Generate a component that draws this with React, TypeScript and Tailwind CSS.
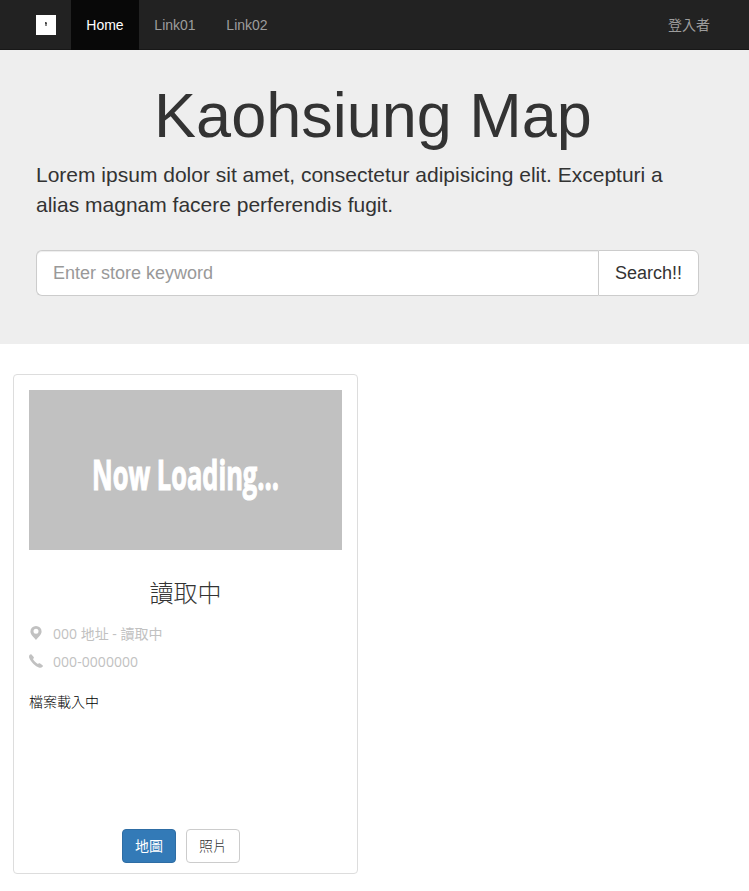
import React from "react";

const NavLink = (props: { label: string; width: string; active?: boolean }) => {
  return (
    <a
      href="#"
      className={`block h-[50px] py-[15px] text-center ${props.width} ${
        props.active ? "bg-[#080808] text-white" : "text-[#9d9d9d]"
      }`}
    >
      {props.label}
    </a>
  );
};

const Navbar = () => {
  return (
    <nav className="flex h-[50px] justify-between border-b border-[#181818] bg-[#222] pl-9 pr-6 text-sm leading-5">
      <div className="flex">
        <a href="#" className="mr-[15px] mt-[15px] block h-5 w-5 bg-white">
          <svg viewBox="0 0 20 20" className="block h-5 w-5">
            <path d="M9 7h2v4H9z" fill="#888" />
            <path d="M9 7h1v1h1v1H9z" fill="#444" />
          </svg>
        </a>
        <NavLink label="Home" width="w-[68px]" active />
        <NavLink label="Link01" width="w-[72px]" />
        <NavLink label="Link02" width="w-[72px]" />
      </div>
      <a href="#" className="block px-[15px] py-[15px] text-[#9d9d9d]">
        登入者
      </a>
    </nav>
  );
};

const Jumbotron = () => {
  return (
    <header className="h-[294px] bg-[#eee] pl-9 pr-[50px] pt-[30px]">
      <h1 className="-mr-[11px] mb-2.5 text-center text-[63px] leading-[70px]">
        Kaohsiung Map
      </h1>
      <p className="text-[21px] leading-[30px]">
        Lorem ipsum dolor sit amet, consectetur adipisicing elit. Excepturi a
        alias magnam facere perferendis fugit.
      </p>
      <div className="mt-[30px] flex h-[46px] text-lg">
        <input
          type="text"
          placeholder="Enter store keyword"
          className="min-w-0 flex-1 rounded-l-md border border-r-0 border-[#ccc] bg-white px-4 shadow-[inset_0_1px_1px_rgba(0,0,0,0.075)] outline-none placeholder:text-[#999]"
        />
        <button className="w-[101px] rounded-r-md border border-[#ccc] bg-white">
          Search!!
        </button>
      </div>
    </header>
  );
};

const StoreCard = () => {
  return (
    <article className="flex h-[500px] w-[345px] flex-col rounded border border-[#ddd] bg-white px-[15px] pb-2.5 pt-[15px] text-sm leading-5">
      <svg
        viewBox="0 0 313 160"
        className="block h-40 w-[313px] overflow-visible bg-[#c1c1c1]"
      >
        <text
          x="63"
          y="99.5"
          textLength="187"
          lengthAdjust="spacingAndGlyphs"
          stroke="white"
          strokeWidth="1.2"
          className="fill-white font-['Open_Sans'] text-[42px] font-bold"
        >
          Now Loading...
        </text>
      </svg>
      <h3 className="mt-[31px] text-center text-2xl font-light leading-[26px]">
        讀取中
      </h3>
      <ul className="mt-[13px] font-['Open_Sans','Noto_Sans_CJK_TC',sans-serif] text-[#c1c1c1]">
        <li className="flex h-7 items-center">
          <svg
            viewBox="0 0 14 14"
            className="-mt-0.5 mr-2.5 h-3.5 w-3.5"
            fill="currentColor"
          >
            <path
              fillRule="evenodd"
              d="M7 0a5.600 5.400 0 0 0-5.600 5.400C1.400 8.600 5 11.300 7 14c2-2.700 5.600-5.400 5.600-8.600A5.600 5.400 0 0 0 7 0Zm0 2.800a2.500 2.500 0 1 1 0 5 2.500 2.500 0 0 1 0-5Z"
            />
          </svg>
          <span>000 地址 - 讀取中</span>
        </li>
        <li className="flex h-7 items-center">
          <svg
            viewBox="0 0 14 14"
            className="-mt-0.5 mr-2.5 h-3.5 w-3.5"
            fill="currentColor"
          >
            <path d="M.8.8C1.400.2 2.100.1 2.500.6L4.700 3.100C5 3.500 4.900 4.200 4.500 4.500L3.900 5.100C4.500 6.500 7.300 9.400 8.900 10.100L9.600 9.400C9.900 9.100 10.400 9.100 10.800 9.300L13.500 11.300C14 11.700 14 12.300 13.500 12.800C12.700 13.700 11.600 14.100 10.400 13.700C6.300 12.300 1.600 7.600.200 3.700C-.200 2.500.100 1.500.8.8Z" />
          </svg>
          <span className="tracking-[0.05px]">000-0000000</span>
        </li>
      </ul>
      <p className="mt-4 font-light text-black">檔案載入中</p>
      <div className="mt-auto flex gap-2.5 pl-[93px]">
        <button className="h-[34px] w-[54px] rounded border border-[#2e6da4] bg-[#337ab7] text-white">
          地圖
        </button>
        <button className="h-[34px] w-[54px] rounded border border-[#ccc] bg-white font-light">
          照片
        </button>
      </div>
    </article>
  );
};

const App = () => {
  return (
    <div className="min-h-screen bg-white font-['Liberation_Sans','Noto_Sans_CJK_TC',sans-serif] text-[#333]">
      <Navbar />
      <Jumbotron />
      <main className="pl-[13px] pt-[30px]">
        <StoreCard />
      </main>
    </div>
  );
};

export default App;
